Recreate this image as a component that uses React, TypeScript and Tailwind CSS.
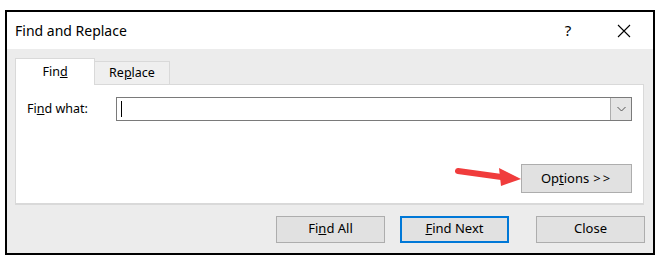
import React from 'react';

const font = { fontFamily: '"Segoe UI", "Noto Sans", "Open Sans", sans-serif' };

const DialogButton = ({ children, primary = false }: { children: React.ReactNode; primary?: boolean }) => (
  <button
    type="button"
    className={
      primary
        ? 'w-[109px] h-[27px] bg-[#e1e1e1] border-2 border-[#0078d7] text-[13px] text-black flex items-center justify-center'
        : 'w-[109px] h-[27px] bg-[#e1e1e1] border border-[#adadad] text-[13px] text-black flex items-center justify-center'
    }
  >
    {children}
  </button>
);

export default function App() {
  return (
    <div className="w-[659px] h-[261px] bg-white pt-[10px] pl-[5px]" style={font}>
      <div className="w-[650px] h-[245px] border-2 border-black flex flex-col">
        {/* Title bar */}
        <div className="h-[37px] bg-white flex items-center pl-[8px] pr-[20px]">
          <span className="text-[14px] text-black flex-1">Find and Replace</span>
          <span className="text-[15px] text-black w-[14px] text-center mr-[42px]">?</span>
          <svg width="14" height="14" viewBox="0 0 14 14" className="mr-[2px]">
            <path d="M1 1L13 13M13 1L1 13" stroke="#000" strokeWidth="1.1" fill="none" />
          </svg>
        </div>

        {/* Body */}
        <div className="flex-1 bg-[#ececec] flex flex-col pl-[8px] pt-[9px]">
          {/* Tabs */}
          <div className="flex items-end h-[27px] relative z-10">
            <div className="w-[80px] h-[27px] bg-white border border-b-0 border-[#d9d9d9] flex items-center justify-center text-[12.5px] text-black">
              Fin<u>d</u>
            </div>
            <div className="w-[75px] h-[23px] bg-[#efefef] border border-l-0 border-b-0 border-[#d9d9d9] flex items-center justify-center text-[12.5px] text-black mb-[1px]">
              Re<u>p</u>lace
            </div>
          </div>

          {/* Panel */}
          <div className="w-[629px] h-[121px] -mt-[1px] bg-white border border-[#d9d9d9] border-b-2 flex flex-col relative">
            <div className="flex items-center mt-[12px] pl-[11px]">
              <span className="w-[89px] text-[12.5px] text-black">
                Fi<u>n</u>d what:
              </span>
              <div className="w-[516px] h-[24px] border border-[#7a7a7a] bg-white flex items-center">
                <div className="w-[1px] h-[16px] bg-black ml-[4px]" />
                <div className="flex-1" />
                <div className="w-[21px] h-[22px] bg-[#e5e5e5] border-l border-[#adadad] flex items-center justify-center">
                  <svg width="9" height="6" viewBox="0 0 9 6">
                    <path d="M0.5 1L4.5 5L8.5 1" stroke="#555" strokeWidth="1" fill="none" />
                  </svg>
                </div>
              </div>
            </div>
            <div className="flex-1" />
            <div className="flex justify-end pr-[11px] mb-[10px]">
              <button
                type="button"
                className="w-[111px] h-[29px] bg-[#e1e1e1] border border-[#adadad] text-[13px] text-black flex items-center justify-center"
              >
                Op<u>t</u>ions <span className="ml-[4px] tracking-[2px]">&gt;&gt;</span>
              </button>
            </div>

            {/* Annotation arrow */}
            <svg
              className="absolute left-[439px] top-[80px]"
              width="68"
              height="24"
              viewBox="0 0 68 24"
            >
              <path d="M3 6L50 12.5" stroke="#f03c3c" strokeWidth="6" strokeLinecap="round" fill="none" />
              <path d="M44 3L66 14L46 21Z" fill="#f03c3c" />
            </svg>
          </div>

          {/* Bottom buttons */}
          <div className="flex-1 flex items-center justify-end pr-[8px]">
            <DialogButton>
              Fi<u>n</u>d All
            </DialogButton>
            <div className="ml-[15px]">
              <DialogButton primary>
                <u>F</u>ind Next
              </DialogButton>
            </div>
            <div className="ml-[27px]">
              <DialogButton>Close</DialogButton>
            </div>
          </div>
        </div>
      </div>
    </div>
  );
}
